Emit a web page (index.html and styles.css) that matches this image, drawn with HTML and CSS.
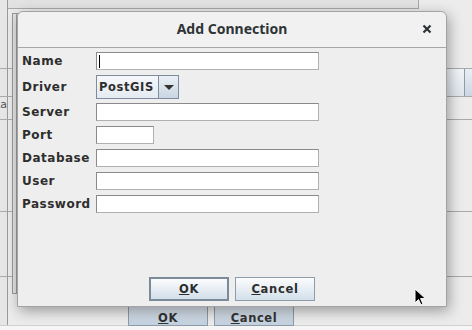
FILE: index.html
```html
<!DOCTYPE html>
<html lang="en">
<head>
    <meta charset="UTF-8">
    <title>Add Connection</title>
    <link rel="stylesheet" href="styles.css">
</head>
<body>
    <div class="desktop">
        <!-- window behind the dialog -->
        <div class="back-window">
            <div class="back-top"></div>
            <div class="back-rule rule-68"></div>
            <div class="back-rule rule-96"></div>
            <div class="back-rule rule-119"></div>
            <div class="back-rule rule-211"></div>
            <div class="back-rule rule-276"></div>
            <div class="back-combo"><span class="back-arrow"></span></div>
        </div>
        <div class="back-label"><span>La</span></div>
        <div class="back-dialog"></div>
        <div class="back-buttons">
            <span class="back-btn"><u>O</u>K</span>
            <span class="back-btn"><u>C</u>ancel</span>
        </div>

        <!-- the dialog -->
        <div class="dialog">
            <div class="titlebar">
                <span class="title">Add Connection</span>
                <svg class="close" width="10" height="10" viewBox="0 0 10 10">
                    <path d="M1.5 1.5 L8.5 8.5 M8.5 1.5 L1.5 8.5" stroke="#2e3436" stroke-width="2.2"/>
                </svg>
            </div>
            <div class="form">
                <label>Name</label>
                <div class="field"><span class="caret"></span></div>

                <label>Driver</label>
                <div class="combo">
                    <span class="combo-text">PostGIS</span>
                    <span class="combo-btn"><span class="combo-arrow"></span></span>
                </div>

                <label>Server</label>
                <div class="field"></div>

                <label>Port</label>
                <div class="field short"></div>

                <label>Database</label>
                <div class="field"></div>

                <label>User</label>
                <div class="field"></div>

                <label>Password</label>
                <div class="field"></div>
            </div>
            <div class="actions">
                <button class="btn focused"><u>O</u>K</button>
                <button class="btn"><u>C</u>ancel</button>
            </div>
        </div>

        <svg class="cursor" width="14" height="20" viewBox="0 0 14 20">
            <path d="M1 1 L1 15 L4.5 11.5 L7 17 L9 16 L6.6 10.6 L11.5 10.6 Z" fill="#000" stroke="#fff" stroke-width="1"/>
        </svg>
    </div>
</body>
</html>
```

FILE: styles.css
```css
body {
    margin: 0;
    background-color: #f4f4f4;
    font-family: 'DejaVu Sans', sans-serif;
    overflow: hidden;
}

.desktop {
    position: relative;
    width: 472px;
    height: 330px;
    overflow: hidden;
    background-color: #f6f6f6;
}

/* --- background window --- */
.back-window {
    position: absolute;
    left: 0;
    top: 0;
    width: 480px;
    height: 325px;
    border-bottom: 1px solid #d0d0d0;
    background-color: #ececec;
    box-shadow: inset 7px 0 0 #e6e6e6, inset 8px 0 0 #9a9a9a;
}

.back-top {
    height: 8px;
    width: 410px;
    margin-left: 8px;
    background-color: #e2e2e2;
    border-bottom: 1px solid #a8a8a8;
    border-right: 1px solid #a8a8a8;
}

.back-rule {
    position: absolute;
    left: 0;
    right: 0;
    height: 1px;
    background-color: #a9a9a9;
}

.rule-68 { top: 68px; }
.rule-96 { top: 96px; }
.rule-119 { top: 119px; }
.rule-211 { top: 211px; }
.rule-276 { top: 276px; }

.back-label {
    position: absolute;
    left: 0;
    top: 98px;
    width: 7px;
    height: 16px;
    overflow: hidden;
    font-size: 11px;
    color: #555;
}

.back-label span {
    margin-left: -6px;
}

.back-combo {
    position: absolute;
    left: 447px;
    top: 69px;
    width: 40px;
    height: 27px;
    background: linear-gradient(#f2f4f7, #dfe6ee);
}

.back-arrow {
    position: absolute;
    left: 17px;
    top: 0;
    bottom: 0;
    width: 20px;
    border-left: 1px solid #8d9bab;
    background: linear-gradient(#e9eef4, #cbd7e3);
}

.back-dialog {
    position: absolute;
    left: 12px;
    top: 13px;
    width: 420px;
    height: 279px;
    border: 1px solid #9a9a9a;
    border-right: none;
    box-shadow: inset 3px 0 0 #e4e4e4, inset 4px 0 0 #9a9a9a;
}

.back-buttons {
    position: absolute;
    left: 128px;
    top: 302px;
    display: flex;
    gap: 6px;
}

.back-btn {
    width: 80px;
    height: 24px;
    padding-top: 8px;
    box-sizing: border-box;
    border: 1px solid #8d9bab;
    background: linear-gradient(#dfe6ee, #c3d1df);
    font-size: 11.5px;
    font-weight: bold;
    letter-spacing: 0.6px;
    color: #333;
    text-align: center;
}

/* --- dialog --- */
.dialog {
    position: absolute;
    left: 17px;
    top: 11px;
    width: 428px;
    height: 294px;
    border: 1px solid #a3a3a3;
    border-radius: 6px 6px 0 0;
    background-color: #eeeeee;
    box-shadow: 2px 4px 14px rgba(0, 0, 0, 0.35);
    display: flex;
    flex-direction: column;
}

.titlebar {
    height: 35px;
    border-bottom: 1px solid #a7a7a7;
    border-radius: 6px 6px 0 0;
    background-color: #f1f1f1;
    display: flex;
    align-items: center;
    justify-content: center;
    position: relative;
}

.title {
    font-family: 'Noto Sans', sans-serif;
    font-size: 14px;
    font-weight: bold;
    color: #2e3436;
    margin-bottom: 3px;
}

.close {
    position: absolute;
    right: 14px;
    top: 12px;
}

.form {
    display: grid;
    grid-template-columns: 74px auto;
    grid-template-rows: 18px 23px 18px 18px 18px 18px 18px;
    row-gap: 5px;
    padding: 4px 0 0 4px;
    justify-items: start;
    align-items: center;
}

.form label {
    font-size: 12px;
    font-weight: bold;
    letter-spacing: 0.5px;
    color: #2e2e2e;
}

.field {
    width: 221px;
    height: 16px;
    border: 1px solid #8a8a8a;
    border-right-color: #b0b0b0;
    border-bottom-color: #b0b0b0;
    background-color: #ffffff;
    position: relative;
}

.field.short {
    width: 56px;
}

.caret {
    position: absolute;
    left: 2px;
    top: 2px;
    width: 1px;
    height: 13px;
    background-color: #000;
}

.combo {
    height: 22px;
    width: 81px;
    border: 1px solid #7d8d9e;
    display: flex;
    background: linear-gradient(#f5f7fa, #e5ebf1);
}

.combo-text {
    width: 62px;
    font-size: 11.5px;
    font-weight: bold;
    letter-spacing: 0.6px;
    color: #2e2e2e;
    padding: 4px 0 0 2px;
    box-sizing: border-box;
}

.combo-btn {
    width: 19px;
    border-left: 1px solid #7d8d9e;
    background: linear-gradient(#e9eff5, #c9d6e3);
    display: flex;
    align-items: center;
    justify-content: center;
}

.combo-arrow {
    width: 0;
    height: 0;
    border-left: 5px solid transparent;
    border-right: 5px solid transparent;
    border-top: 5px solid #333;
    margin-top: 1px;
}

.actions {
    margin-top: auto;
    margin-bottom: 5px;
    display: flex;
    justify-content: center;
    gap: 6px;
}

.btn {
    width: 80px;
    height: 24px;
    padding: 0;
    border: 1px solid #8d9bab;
    background: linear-gradient(#fbfcfd, #d3dfea);
    font-family: 'DejaVu Sans', sans-serif;
    font-size: 11.5px;
    font-weight: bold;
    letter-spacing: 0.7px;
    color: #2e2e2e;
}

.btn.focused {
    border: 2px solid #7b8a99;
}

.cursor {
    position: absolute;
    left: 414px;
    top: 288px;
}
```
